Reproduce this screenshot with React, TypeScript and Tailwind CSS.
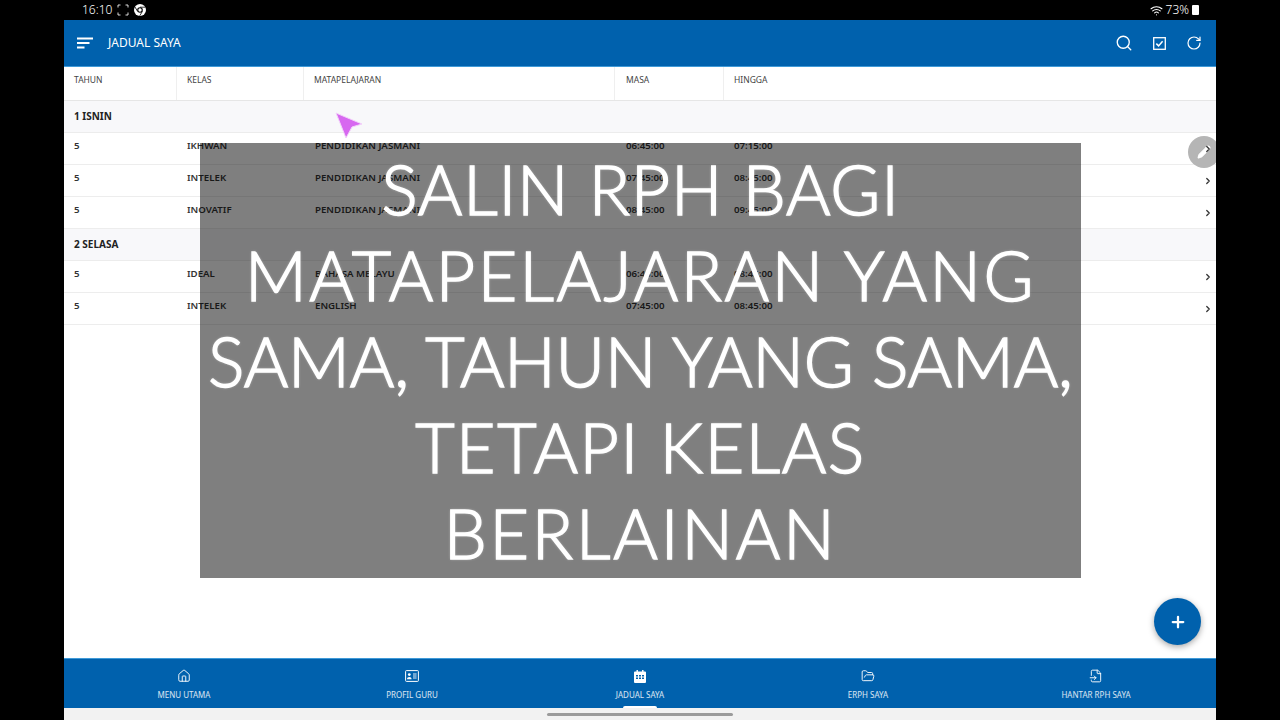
import React from 'react';
import { Search, RotateCw, ChevronRight, Home, FolderOpen, FileInput, Plus, Pencil, Wifi } from 'lucide-react';

const columns = 'grid grid-cols-[113px_127px_311px_109px_1fr]';

type Row = { tahun: string; kelas: string; mata: string; masa: string; hingga: string };

const isnin: Row[] = [
  { tahun: '5', kelas: 'IKHWAN', mata: 'PENDIDIKAN JASMANI', masa: '06:45:00', hingga: '07:15:00' },
  { tahun: '5', kelas: 'INTELEK', mata: 'PENDIDIKAN JASMANI', masa: '07:45:00', hingga: '08:45:00' },
  { tahun: '5', kelas: 'INOVATIF', mata: 'PENDIDIKAN JASMANI', masa: '08:45:00', hingga: '09:45:00' },
];

const selasa: Row[] = [
  { tahun: '5', kelas: 'IDEAL', mata: 'BAHASA MELAYU', masa: '06:45:00', hingga: '08:45:00' },
  { tahun: '5', kelas: 'INTELEK', mata: 'ENGLISH', masa: '07:45:00', hingga: '08:45:00' },
];

const MenuIcon = () => (
  <svg width="16" height="12" viewBox="0 0 16 12" fill="none" stroke="white" strokeWidth="2">
    <path d="M0 1.5h16M0 6h12.5M0 10.5h7.5" />
  </svg>
);

const CheckBoxIcon = () => (
  <svg width="13" height="13" viewBox="0 0 13 13" fill="none" stroke="white">
    <rect x="0.7" y="0.7" width="11.600" height="11.600" strokeWidth="1.300" />
    <path d="M3.300 6.600l2.300 2.300 4-4.600" strokeWidth="1.500" />
  </svg>
);

const ExpandIcon = () => (
  <svg width="12" height="12" viewBox="0 0 12 12" fill="none" stroke="white" strokeOpacity="0.85">
    <path d="M1 3.500V1h2.500M8.500 1H11v2.500M11 8.500V11H8.500M3.500 11H1V8.500" />
  </svg>
);

const ChromeIcon = () => (
  <svg width="12" height="12" viewBox="0 0 12 12">
    <circle cx="6" cy="6" r="6" fill="white" />
    <circle cx="6" cy="6" r="2.800" fill="black" />
    <circle cx="6" cy="6" r="1.700" fill="white" />
    <path d="M6 3.200h5.300M3.600 7.400L1 3M8.400 7.400L5.700 11.800" stroke="black" strokeWidth="0.800" />
  </svg>
);

const ProfileIcon = () => (
  <svg width="14" height="12" viewBox="0 0 14 12" fill="none" stroke="white">
    <rect x="0.6" y="0.6" width="12.800" height="10.800" rx="0.8" />
    <circle cx="4.300" cy="4.600" r="1.400" fill="white" stroke="none" />
    <path d="M2 9.200c0-3 4.600-3 4.600 0z" fill="white" stroke="none" />
    <path d="M8 4h3.600M8 6h3.600M8 8h3.600" strokeWidth="0.9" />
  </svg>
);

const CalendarIcon = () => (
  <svg width="12" height="13" viewBox="0 0 12 13" fill="white">
    <path d="M2.500 0h1.400v1.500h4.200V0h1.400v1.500H11a1 1 0 0 1 1 1V12a1 1 0 0 1-1 1H1a1 1 0 0 1-1-1V2.500a1 1 0 0 1 1-1h1.500z" />
    <path d="M2 5h2v1.500H2zM5 5h2v1.500H5zM8 5h2v1.500H8zM2 7.500h2V9H2zM5 7.500h2V9H5zM8 7.500h2V9H8z" fill="#0061ad" />
  </svg>
);

const nav = [
  { label: 'MENU UTAMA', icon: <Home size={14} strokeWidth={1.6} /> },
  { label: 'PROFIL GURU', icon: <ProfileIcon /> },
  { label: 'JADUAL SAYA', icon: <CalendarIcon />, active: true },
  { label: 'ERPH SAYA', icon: <FolderOpen size={14} strokeWidth={1.6} /> },
  { label: 'HANTAR RPH SAYA', icon: <FileInput size={14} strokeWidth={1.6} /> },
];

function GroupRow({ title }: { title: string }) {
  return (
    <div className="h-8 flex items-center pl-2.5 bg-[#f8f8fa] border-b border-[#ececec] text-[10px] font-bold text-[#222]">
      {title}
    </div>
  );
}

function DataRow({ row }: { row: Row }) {
  return (
    <div className={`${columns} relative h-8 items-center border-b border-[#ededed] pb-1 text-[9.7px] font-semibold text-[#333]`}>
      <div className="pl-2.5">{row.tahun}</div>
      <div className="pl-2.5">{row.kelas}</div>
      <div className="pl-[11px]">{row.mata}</div>
      <div className="pl-[11px]">{row.masa}</div>
      <div className="pl-2.5">{row.hingga}</div>
      <ChevronRight size={10} strokeWidth={3} className="absolute right-[3px] top-[11px] text-[#333]" />
    </div>
  );
}

export default function App() {
  return (
    <div className="relative w-[1280px] h-[720px] overflow-hidden bg-black font-['Noto_Sans',sans-serif]">
      {/* status bar */}
      <div className="h-5 flex items-center justify-between pl-[82px] pr-[81px] text-white text-[12px] leading-none">
        <div className="flex items-center gap-[5px]">
          <span className="font-light">16:10</span>
          <ExpandIcon />
          <ChromeIcon />
        </div>
        <div className="flex items-center gap-[3px]">
          <Wifi size={13} strokeWidth={2} />
          <span className="font-light">73%</span>
          <span className="w-[7px] h-[10px] bg-white rounded-[1px]" />
        </div>
      </div>

      <div className="relative mx-16 w-[1152px] h-[700px] flex flex-col bg-white overflow-hidden">
        {/* header */}
        <header className="h-[47px] shrink-0 flex items-center justify-between pl-[13px] pr-[14px] bg-[#0061ad] border-b border-[#3f9ad8] text-white">
          <div className="flex items-center gap-[15px]">
            <MenuIcon />
            <span className="text-[12px]">JADUAL SAYA</span>
          </div>
          <div className="flex items-center gap-5">
            <Search size={18} strokeWidth={1.8} />
            <CheckBoxIcon />
            <RotateCw size={16} strokeWidth={1.8} />
          </div>
        </header>

        {/* table head */}
        <div className={`${columns} h-[34px] shrink-0 border-b border-[#e6e6e6] text-[8.5px] text-[#444]`}>
          <div className="pl-2.5 pb-1.5 flex items-center border-r border-[#efefef]">TAHUN</div>
          <div className="pl-2.5 pb-1.5 flex items-center border-r border-[#efefef]">KELAS</div>
          <div className="pl-2.5 pb-1.5 flex items-center border-r border-[#efefef]">MATAPELAJARAN</div>
          <div className="pl-[11px] pb-1.5 flex items-center border-r border-[#efefef]">MASA</div>
          <div className="pl-2.5 pb-1.5 flex items-center">HINGGA</div>
        </div>

        {/* rows */}
        <div className="flex-1">
          <GroupRow title="1 ISNIN" />
          {isnin.map((r) => <DataRow key={r.kelas} row={r} />)}
          <GroupRow title="2 SELASA" />
          {selasa.map((r) => <DataRow key={r.kelas} row={r} />)}
        </div>

        {/* bottom nav */}
        <nav className="h-[50px] shrink-0 grid grid-cols-5 px-1.5 bg-[#0061ad] border-t border-[#3f9ad8] text-white">
          {nav.map((item) => (
            <div key={item.label} className="relative flex flex-col items-center pt-[10px]">
              <div className="h-[14px] flex items-center">{item.icon}</div>
              <span className="mt-[6px] text-[8px] leading-[12px] text-white/85">{item.label}</span>
              {item.active && <span className="absolute bottom-0 w-[34px] h-[2px] bg-white rounded-t" />}
            </div>
          ))}
        </nav>
        <div className="h-3 shrink-0 flex justify-center items-center bg-[#f2f2f2]">
          <span className="w-[186px] h-[3px] rounded-full bg-[#9b9b9b]" />
        </div>

        {/* floating buttons */}
        <button className="absolute left-[1090px] top-[578px] w-[47px] h-[47px] rounded-full bg-[#0061ad] shadow-[0_2px_6px_rgba(0,0,0,0.35)] flex items-center justify-center text-white">
          <Plus size={18} strokeWidth={3} />
        </button>
        <div className="absolute left-[1124px] top-[116px] w-8 h-8 rounded-full bg-[#b5b5b5] flex items-center justify-center text-white">
          <Pencil size={14} strokeWidth={2} fill="white" />
        </div>
        <ChevronRight size={10} strokeWidth={3} className="absolute right-[3px] top-[124px] text-[#333]" />
        <svg className="absolute left-[271px] top-[92px]" width="28" height="28" viewBox="0 0 28 28">
          <path d="M1 1l26 11-10 3-6 11z" fill="#d768f0" stroke="#f3d3fa" strokeWidth="1" />
        </svg>
      </div>

      {/* caption overlay */}
      <div className="absolute left-[200px] top-[143px] w-[881px] h-[435px] bg-black/50 flex flex-col items-center pt-[3px] text-white font-['Lato',sans-serif] font-light text-[68px] leading-[86px] whitespace-nowrap [-webkit-text-stroke:1.5px_white] [text-shadow:0_0_3px_rgba(255,255,255,0.6)]">
        <span className="tracking-[0.9px]">SALIN RPH BAGI</span>
        <span className="tracking-[2.5px]">MATAPELAJARAN YANG</span>
        <span className="tracking-[-0.1px]">SAMA, TAHUN YANG SAMA,</span>
        <span className="tracking-[1.6px]">TETAPI KELAS</span>
        <span className="tracking-[2.9px]">BERLAINAN</span>
      </div>
    </div>
  );
}
